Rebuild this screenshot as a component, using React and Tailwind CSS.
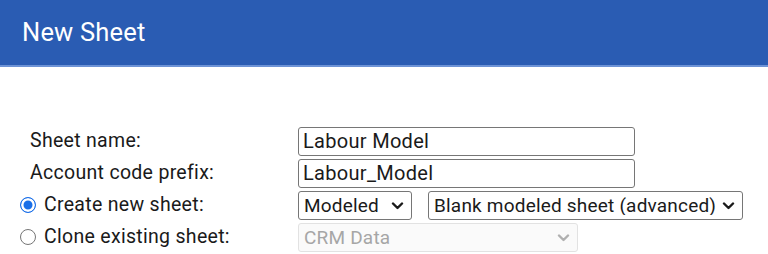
import React from 'react';

const Chevron = ({ className }) => (
  <svg viewBox="0 0 12 8" className={className} fill="none" stroke="currentColor" strokeWidth="2.4" strokeLinecap="round" strokeLinejoin="round">
    <path d="M1.5 1.5 6 6l4.5-4.5" />
  </svg>
);

const Select = ({ value, width, disabled }) => (
  <div className={`relative ${width}`}>
    <select
      disabled={disabled}
      defaultValue={value}
      className={`appearance-none w-full h-[29px] rounded-[3px] border pl-[5px] pr-6 text-[19px] tracking-[0.2px] leading-none ${
        disabled ? 'border-[#e2e2e2] text-[#a6a6a6] bg-[#fafafa]' : 'border-[#767676] text-[#1a1a1a] bg-white'
      }`}
    >
      <option>{value}</option>
    </select>
    <Chevron
      className={`pointer-events-none absolute right-[8px] top-[11px] w-[13px] h-[8px] ${
        disabled ? 'text-[#b0b0b0]' : 'text-[#1a1a1a]'
      }`}
    />
  </div>
);

const Label = ({ children }) => (
  <span className="pl-[10px] text-[19.5px] tracking-[0.3px] text-[#1a1a1a]">{children}</span>
);

const RadioLabel = ({ children, checked }) => (
  <label className="flex items-center gap-[8px] text-[19.5px] tracking-[0.3px] text-[#1a1a1a]">
    <input
      type="radio"
      name="mode"
      defaultChecked={checked}
      className="appearance-none shrink-0 w-[16px] h-[16px] m-0 rounded-full border-[1.5px] border-[#767676] bg-white checked:border-[#1a6fe8] checked:bg-[#1a6fe8] checked:shadow-[inset_0_0_0_2.5px_white]"
    />
    {children}
  </label>
);

export default function App() {
  return (
    <div className="w-[768px] h-[254px] bg-white font-['Roboto',sans-serif] overflow-hidden">
      <header className="h-[67px] bg-[#2a5cb3] border-b-2 border-[#6d93d6] flex items-center pl-[22px]">
        <h1 className="text-white text-[25.5px] tracking-[0.2px] font-normal">New Sheet</h1>
      </header>
      <div className="pt-[58px] pl-[20px] grid grid-cols-[278px_auto] auto-rows-[32px] items-center">
        <Label>Sheet name:</Label>
        <input
          defaultValue="Labour Model"
          className="w-[337px] h-[29px] rounded-[3px] border border-[#767676] px-[4px] text-[20px] tracking-[0.3px] text-[#1a1a1a]"
        />
        <Label>Account code prefix:</Label>
        <input
          defaultValue="Labour_Model"
          className="w-[337px] h-[29px] rounded-[3px] border border-[#767676] px-[4px] text-[20px] tracking-[0.3px] text-[#1a1a1a]"
        />
        <RadioLabel checked>Create new sheet:</RadioLabel>
        <div className="flex gap-[16px]">
          <Select value="Modeled" width="w-[114px]" />
          <Select value="Blank modeled sheet (advanced)" width="w-[315px]" />
        </div>
        <RadioLabel>Clone existing sheet:</RadioLabel>
        <Select value="CRM Data" width="w-[280px]" disabled />
      </div>
    </div>
  );
}
